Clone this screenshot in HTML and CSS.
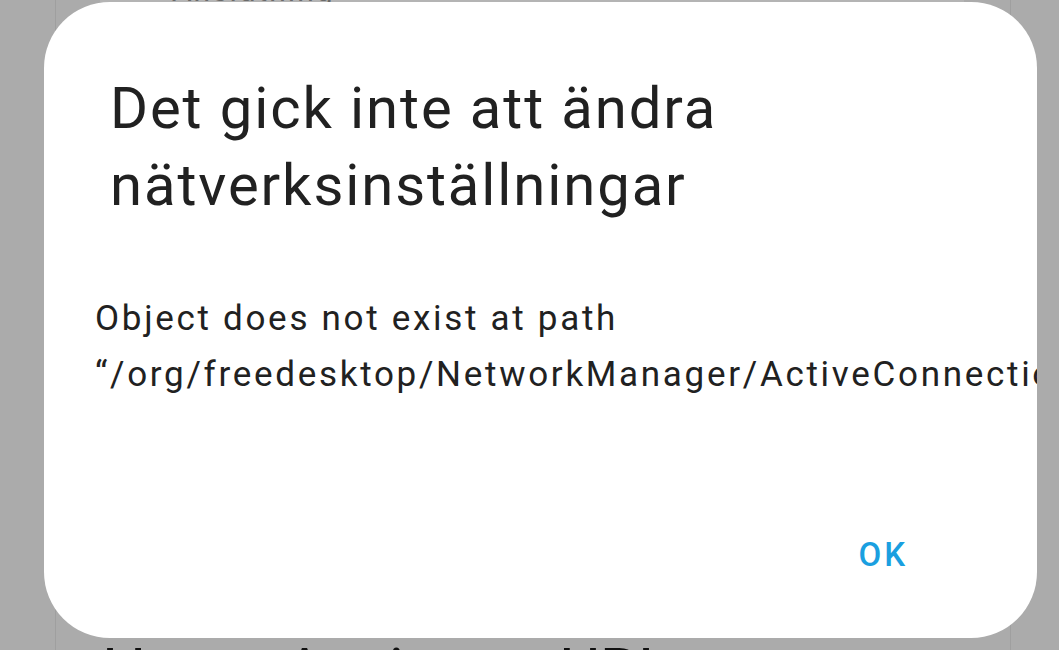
FILE: index.html
```html
<!DOCTYPE html>
<html>
<head>
<meta charset="utf-8">
<link rel="stylesheet" href="styles.css">
</head>
<body>
<div class="page">
  <div class="card">
    <div class="card-top"><span class="card-top-text">Anslutning</span></div>
    <div class="card-heading">Home Assistant URL</div>
  </div>
</div>
<div class="dialog">
  <h1 class="dialog-title">Det gick inte att ändra nätverksinställningar</h1>
  <p class="dialog-body">Object does not exist at path “/org/freedesktop/NetworkManager/ActiveConnection/12”</p>
  <div class="dialog-actions">
    <button class="btn-ok">OK</button>
  </div>
</div>
</body>
</html>
```
FILE: styles.css
```css
html, body {
  margin: 0;
  padding: 0;
}
body {
  width: 1059px;
  height: 650px;
  overflow: hidden;
  background: #ababab;
  font-family: Roboto, "Noto Sans", sans-serif;
  position: relative;
}
.page {
  height: 650px;
  padding: 0 48px 0 55px;
  box-sizing: border-box;
}
.card {
  height: 100%;
  border-left: 1px solid #9f9f9f;
  border-right: 1px solid #9f9f9f;
  box-sizing: border-box;
  display: flex;
  flex-direction: column;
  justify-content: space-between;
}
.card-top {
  margin: 0 46px 0 44px;
  height: 2px;
  background: #b4b4b4;
  position: relative;
}
.card-top-text {
  position: absolute;
  left: 72px;
  bottom: -4px;
  font-size: 30px;
  line-height: 30px;
  letter-spacing: 2px;
  color: #6a6a6a;
}
.card-heading {
  padding-left: 46px;
  font-size: 62px;
  line-height: 1;
  color: #111;
  margin-bottom: -52px;
}
.dialog {
  position: absolute;
  left: 44px;
  top: 2px;
  width: 993px;
  height: 636px;
  background: #fff;
  border-radius: 66px;
  overflow: hidden;
  display: flex;
  flex-direction: column;
  box-sizing: border-box;
  padding: 68px 0 0 0;
}
.dialog-title {
  margin: 0;
  padding: 0 60px 0 66px;
  font-size: 58px;
  font-weight: 400;
  line-height: 77px;
  letter-spacing: 1.9px;
  color: #212121;
}
.dialog-body {
  margin: 67px 0 0 0;
  padding: 0 0 0 51px;
  font-size: 35px;
  line-height: 56px;
  letter-spacing: 2.7px;
  color: #212121;
}
.dialog-actions {
  margin-top: auto;
  display: flex;
  justify-content: flex-end;
  padding: 0 129px 63px 0;
}
.btn-ok {
  border: 0;
  background: none;
  padding: 0;
  font-family: Roboto, "Noto Sans", sans-serif;
  font-size: 33px;
  font-weight: 500;
  letter-spacing: 0.09em;
  line-height: 40px;
  color: #1a9fe0;
}
```
